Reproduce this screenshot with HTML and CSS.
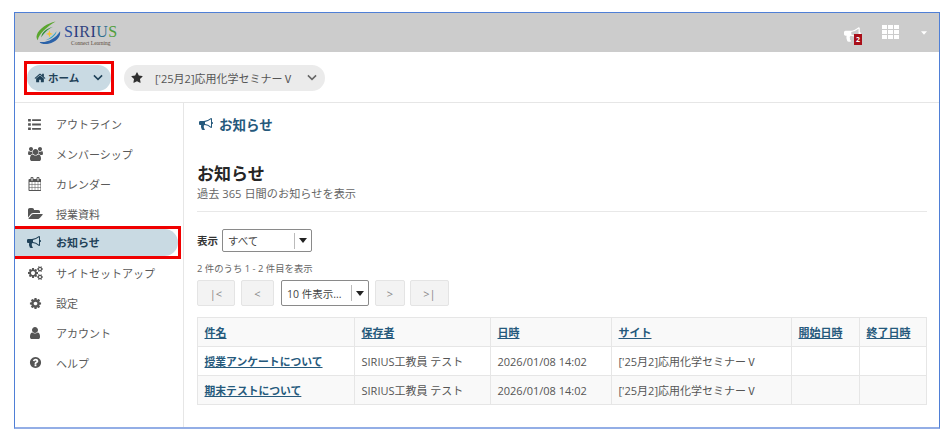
FILE: index.html
```html
<!DOCTYPE html>
<html lang="ja">
<head>
<meta charset="utf-8">
<title>お知らせ</title>
<link rel="stylesheet" href="styles.css">
</head>
<body>
<svg class="defs" width="0" height="0" aria-hidden="true">
  <symbol id="i-bullhorn" viewBox="0 0 1792 1792"><path d="M1664 640q53 0 90.500 37.500t37.500 90.500-37.500 90.500-90.500 37.500v384q0 52-38 90t-90 38q-417-347-812-380-58 19-91 66t-31 100.500 40 92.500q-20 33-23 65.500t6 58 33.500 55 48 50 61.500 50.500q-29 58-111.500 83t-168.500 11.500-132-55.500q-7-23-29.500-87.500t-32-94.500-23-89-15-101 3.500-98.500 22-110.500h-122q-66 0-113-47t-47-113v-192q0-66 47-113t113-47h480q435 0 896-384 52 0 90 38t38 90v384zm-128 604v-954q-394 302-768 343v270q377 42 768 341z"/></symbol>
  <symbol id="i-list" viewBox="0 0 14 12"><path d="M0 0h3v2.600H0zM0 4.700h3v2.600H0zM0 9.400h3V12H0zM4.400.3H14v2H4.400zM4.400 5H14v2H4.400zM4.400 9.700H14v2H4.400z"/></symbol>
  <symbol id="i-group" viewBox="0 0 1920 1792"><path d="M593 896q-162 5-265 128h-134q-82 0-138-40.500t-56-118.500q0-353 124-353 6 0 43.500 21t97.500 42.500 119 21.500q67 0 133-23-5 37-5 66 0 139 81 256zm1071 637q0 120-73 189.500t-194 69.500h-874q-121 0-194-69.500t-73-189.500q0-53 3.500-103.500t14-109 26.500-108.500 43-97.500 62-81 85.500-53.500 111.500-20q10 0 43 21.500t73 48 107 48 135 21.500 135-21.500 107-48 73-48 43-21.500q61 0 111.500 20t85.500 53.500 62 81 43 97.500 26.500 108.500 14 109 3.500 103.500zm-1024-1277q0 106-75 181t-181 75-181-75-75-181 75-181 181-75 181 75 75 181zm704 384q0 159-112.500 271.500t-271.500 112.500-271.500-112.500-112.500-271.500 112.500-271.500 271.500-112.500 271.500 112.500 112.500 271.500zm576 225q0 78-56 118.500t-138 40.500h-134q-103-123-265-128 81-117 81-256 0-29-5-66 66 23 133 23 59 0 119-21.500t97.500-42.500 43.500-21q124 0 124 353zm-128-609q0 106-75 181t-181 75-181-75-75-181 75-181 181-75 181 75 75 181z"/></symbol>
  <symbol id="i-cal" viewBox="0 0 1664 1792"><path d="M192 1664h288v-288h-288v288zm352 0h320v-288h-320v288zm-352-352h288v-320h-288v320zm352 0h320v-320h-320v320zm-352-384h288v-288h-288v288zm736 736h320v-288h-320v288zm-384-736h320v-288h-320v288zm768 736h288v-288h-288v288zm-384-352h320v-320h-320v320zm-352-864v-288q0-13-9.500-22.500t-22.500-9.500h-64q-13 0-22.500 9.500t-9.500 22.500v288q0 13 9.500 22.500t22.500 9.500h64q13 0 22.500-9.500t9.500-22.500zm736 864h288v-320h-288v320zm-384-384h320v-288h-320v288zm384 0h288v-288h-288v288zm32-480v-288q0-13-9.500-22.500t-22.500-9.500h-64q-13 0-22.500 9.500t-9.500 22.500v288q0 13 9.500 22.500t22.500 9.500h64q13 0 22.500-9.500t9.500-22.500zm384-64v1280q0 52-38 90t-90 38h-1408q-52 0-90-38t-38-90v-1280q0-52 38-90t90-38h128v-96q0-66 47-113t113-47h64q66 0 113 47t47 113v96h384v-96q0-66 47-113t113-47h64q66 0 113 47t47 113v96h128q52 0 90 38t38 90z"/></symbol>
  <symbol id="i-folder" viewBox="0 0 1920 1792"><path d="M1879 952q0 31-31 66l-336 396q-43 51-120.500 86.500t-143.500 35.500h-1088q-34 0-60.500-13t-26.500-43q0-31 31-66l336-396q43-51 120.500-86.500t143.500-35.500h1088q34 0 60.500 13t26.500 43zm-343-344v160h-832q-94 0-197 47.500t-164 119.500l-337 396-5 6q0-4-.5-12.500t-.5-12.500v-960q0-92 66-158t158-66h320q92 0 158 66t66 158v32h544q92 0 158 66t66 158z"/></symbol>
  <symbol id="i-cogs" viewBox="0 0 1920 1792"><path d="M896 896q0-106-75-181t-181-75-181 75-75 181 75 181 181 75 181-75 75-181zm768 512q0-52-38-90t-90-38-90 38-38 90q0 53 37.500 90.500t90.500 37.500 90.500-37.500 37.500-90.500zm0-1024q0-52-38-90t-90-38-90 38-38 90q0 53 37.500 90.500t90.500 37.500 90.500-37.500 37.500-90.500zm-384 421v185q0 10-7 19.500t-16 10.500l-155 24q-11 35-32 76 34 48 90 115 7 11 7 20 0 12-7 19-23 30-82.500 89.500t-78.500 59.500q-11 0-21-7l-115-90q-37 19-77 31-11 108-23 155-7 24-30 24h-186q-11 0-20-7.500t-10-17.500l-23-153q-34-10-75-31l-118 89q-7 7-20 7-11 0-21-8-144-133-144-160 0-9 7-19 10-14 41-53t47-61q-23-44-35-82l-152-24q-10-1-17-9.500t-7-19.500v-185q0-10 7-19.500t16-10.500l155-24q11-35 32-76-34-48-90-115-7-11-7-20 0-12 7-20 22-30 82-89t79-59q11 0 21 7l115 90q34-18 77-32 11-108 23-154 7-24 30-24h186q11 0 20 7.500t10 17.500l23 153q34 10 75 31l118-89q8-7 20-7 11 0 21 8 144 133 144 160 0 8-7 19-12 16-42 54t-45 60q23 48 34 82l152 23q10 2 17 10.500t7 19.500zm640 533v140q0 16-149 31-12 27-30 52 51 113 51 138 0 4-4 7-122 71-124 71-8 0-46-47t-52-68q-20 2-30 2t-30-2q-14 21-52 68t-46 47q-2 0-124-71-4-3-4-7 0-25 51-138-18-25-30-52-149-15-149-31v-140q0-16 149-31 13-29 30-52-51-113-51-138 0-4 4-7 4-2 35-20t59-34 30-16q8 0 46 46.500t52 67.500q20-2 30-2t30 2q51-71 92-112l6-2q4 0 124 70 4 3 4 7 0 25-51 138 17 23 30 52 149 15 149 31zm0-1024v140q0 16-149 31-12 27-30 52 51 113 51 138 0 4-4 7-122 71-124 71-8 0-46-47t-52-68q-20 2-30 2t-30-2q-14 21-52 68t-46 47q-2 0-124-71-4-3-4-7 0-25 51-138-18-25-30-52-149-15-149-31v-140q0-16 149-31 13-29 30-52-51-113-51-138 0-4 4-7 4-2 35-20t59-34 30-16q8 0 46 46.500t52 67.500q20-2 30-2t30 2q51-71 92-112l6-2q4 0 124 70 4 3 4 7 0 25-51 138 17 23 30 52 149 15 149 31z"/></symbol>
  <symbol id="i-cog" viewBox="0 0 1792 1792"><path d="M1152 896q0-106-75-181t-181-75-181 75-75 181 75 181 181 75 181-75 75-181zm512-109v222q0 12-8 23t-20 13l-185 28q-19 54-39 91 35 50 107 138 10 12 10 25t-9 23q-27 37-99 108t-94 71q-12 0-26-9l-138-108q-44 23-91 38-16 136-29 186-7 28-36 28h-222q-14 0-24.500-8.500t-11.500-21.500l-28-184q-49-16-90-37l-141 107q-10 9-25 9-14 0-25-11-126-114-165-168-7-10-7-23 0-12 8-23 15-21 51-66.500t54-70.500q-27-50-41-99l-183-27q-13-2-21-12.500t-8-23.500v-222q0-12 8-23t19-13l186-28q14-46 39-92-40-57-107-138-10-12-10-24 0-10 9-23 26-36 98.500-107.500t94.500-71.500q13 0 26 10l138 107q44-23 91-38 16-136 29-186 7-28 36-28h222q14 0 24.500 8.500t11.500 21.500l28 184q49 16 90 37l142-107q9-9 24-9 13 0 25 10 129 119 165 170 7 8 7 22 0 12-8 23-15 21-51 66.500t-54 70.500q26 50 41 98l183 28q13 2 21 12.500t8 23.500z"/></symbol>
  <symbol id="i-user" viewBox="0 0 1792 1792"><path d="M1536 1399q0 109-62.500 187t-150.500 78h-854q-88 0-150.500-78t-62.500-187q0-85 8.500-160.500t31.500-152 58.500-131 94-89 134.500-34.500q131 128 313 128t313-128q76 0 134.500 34.500t94 89 58.500 131 31.500 152 8.500 160.500zm-256-887q0 159-112.500 271.500t-271.500 112.500-271.500-112.500-112.500-271.500 112.500-271.500 271.500-112.500 271.500 112.500 112.500 271.500z"/></symbol>
  <symbol id="i-help" viewBox="0 0 1792 1792"><path d="M1024 1376v-192q0-14-9-23t-23-9h-192q-14 0-23 9t-9 23v192q0 14 9 23t23 9h192q14 0 23-9t9-23zm256-672q0-88-55.500-163t-138.500-116-170-41q-243 0-371 213-15 24 8 42l132 100q7 6 19 6 16 0 25-12 53-68 86-92 34-24 86-24 48 0 85.500 26t37.500 59q0 38-20 61t-68 45q-63 28-115.500 86.500t-52.500 125.500v36q0 14 9 23t23 9h192q14 0 23-9t9-23q0-19 21.500-49.500t54.500-49.500q32-18 49-28.500t46-35 44.500-48 28-60.500 12.500-81zm384 192q0 209-103 385.500t-279.500 279.500-385.500 103-385.500-103-279.500-279.500-103-385.500 103-385.500 279.500-279.500 385.500-103 385.500 103 279.500 279.500 103 385.500z"/></symbol>
  <symbol id="i-home" viewBox="0 0 1792 1792"><path d="M1472 992v480q0 26-19 45t-45 19h-384v-384h-256v384h-384q-26 0-45-19t-19-45v-480q0-1 .5-3t.5-3l575-474 575 474q1 2 1 6zm223-69l-62 74q-8 9-21 11h-3q-13 0-21-7l-692-577-692 577q-12 8-24 7-13-2-21-11l-62-74q-8-10-7-23.500t11-21.500l719-599q32-26 76-26t76 26l244 204v-195q0-14 9-23t23-9h192q14 0 23 9t9 23v408l219 182q10 8 11 21.500t-7 23.500z"/></symbol>
  <symbol id="i-star" viewBox="0 0 1792 1792"><path d="M1728 647q0 22-26 48l-363 354 86 500q1 7 1 20 0 21-10.500 35.500t-30.500 14.500q-19 0-40-12l-449-236-449 236q-22 12-40 12-21 0-31.500-14.500t-10.500-35.500q0-6 2-20l86-500-364-354q-25-27-25-48 0-37 56-46l502-73 225-455q19-41 49-41t49 41l225 455 502 73q56 9 56 46z"/></symbol>
  <symbol id="i-chev" viewBox="0 0 11 7"><path d="M1 1.200 5.500 5.500 10 1.200" fill="none" stroke="currentColor" stroke-width="1.700"/></symbol>
  <symbol id="i-caret" viewBox="0 0 10 6"><path d="M0 0h10L5 6Z"/></symbol>
</svg>

<div class="frame">
  <header class="topbar">
    <a class="logo" href="#">
      <svg class="logo-mark" viewBox="0 0 28 28" aria-hidden="true">
        <path d="M22 1C13 3 3 9 1 16c-1 3 0 5 1 6C3 15 12 7 22 1Z" fill="#5aa62e"/>
        <path d="M19 7C12 9 6 13 6 19c2-4 7-9 13-12Z" fill="#2f8f3a"/>
        <path d="M27 12c1 6-4 12-13 14-4 1-9 0-10-2 9 1 18-4 23-12Z" fill="#2b62a8"/>
        <path d="M23 12c-1 5-6 9-12 10 5-2 9-6 12-10Z" fill="#2aa0c8"/>
        <path d="m15 11 1 3 3 1-3 1-1 3-1-3-3-1 3-1Z" fill="#f3c531"/>
      </svg>
      <span class="logo-text">
        <span class="logo-name"><span class="c1">S</span><span class="c2">I</span><span class="c3">R</span><span class="c2">I</span><span class="c4">U</span><span class="c5">S</span></span>
        <span class="logo-sub">Connect Learning</span>
      </span>
    </a>
    <div class="top-actions">
      <span class="notify">
        <svg class="ic-notify"><use href="#i-bullhorn"/></svg>
        <span class="badge">2</span>
      </span>
      <span class="grid-ic"><i></i><i></i><i></i><i></i><i></i><i></i><i></i><i></i><i></i></span>
      <svg class="ic-topcaret"><use href="#i-caret"/></svg>
    </div>
  </header>

  <nav class="sitebar">
    <div class="mark mark-home">
      <a class="pill pill-home" href="#">
        <svg class="ic-home"><use href="#i-home"/></svg>
        <span class="pill-label">ホーム</span>
        <svg class="ic-chev"><use href="#i-chev"/></svg>
      </a>
    </div>
    <a class="pill pill-site" href="#">
      <svg class="ic-star"><use href="#i-star"/></svg>
      <span class="site-label">['25月2]応用化学セミナーⅤ</span>
      <svg class="ic-chev"><use href="#i-chev"/></svg>
    </a>
  </nav>

  <div class="body">
    <aside class="side">
      <a class="side-item" href="#"><span class="side-ic"><svg class="s-list"><use href="#i-list"/></svg></span>アウトライン</a>
      <a class="side-item" href="#"><span class="side-ic"><svg class="s-group"><use href="#i-group"/></svg></span>メンバーシップ</a>
      <a class="side-item" href="#"><span class="side-ic"><svg class="s-cal"><use href="#i-cal"/></svg></span>カレンダー</a>
      <a class="side-item" href="#"><span class="side-ic"><svg class="s-folder"><use href="#i-folder"/></svg></span>授業資料</a>
      <div class="mark mark-side">
        <a class="side-item active" href="#"><span class="side-ic"><svg class="s-horn"><use href="#i-bullhorn"/></svg></span>お知らせ</a>
      </div>
      <a class="side-item" href="#"><span class="side-ic"><svg class="s-cogs"><use href="#i-cogs"/></svg></span>サイトセットアップ</a>
      <a class="side-item" href="#"><span class="side-ic"><svg class="s-cog"><use href="#i-cog"/></svg></span>設定</a>
      <a class="side-item" href="#"><span class="side-ic"><svg class="s-user"><use href="#i-user"/></svg></span>アカウント</a>
      <a class="side-item" href="#"><span class="side-ic"><svg class="s-help"><use href="#i-help"/></svg></span>ヘルプ</a>
    </aside>

    <main class="main">
      <div class="tool-title"><svg class="ic-title"><use href="#i-bullhorn"/></svg>お知らせ</div>
      <h2 class="page-title">お知らせ</h2>
      <p class="page-sub">過去 365 日間のお知らせを表示</p>
      <div class="filter">
        <span class="filter-label">表示</span>
        <span class="select select-all"><span class="select-text">すべて</span><span class="select-btn"><svg class="ic-selcaret"><use href="#i-caret"/></svg></span></span>
      </div>
      <p class="count">2 件のうち 1 - 2 件目を表示</p>
      <div class="pager">
        <button class="pg pg-first" type="button">|&lt;</button>
        <button class="pg" type="button">&lt;</button>
        <span class="select select-page"><span class="select-text">10 件表示...</span><span class="select-btn"><svg class="ic-selcaret"><use href="#i-caret"/></svg></span></span>
        <button class="pg pg-next" type="button">&gt;</button>
        <button class="pg pg-last" type="button">&gt;|</button>
      </div>
      <table class="list">
        <colgroup><col class="c-a"><col class="c-b"><col class="c-c"><col class="c-d"><col class="c-e"><col class="c-f"></colgroup>
        <thead>
          <tr><th><a href="#">件名</a></th><th><a href="#">保存者</a></th><th><a href="#">日時</a></th><th><a href="#">サイト</a></th><th><a href="#">開始日時</a></th><th><a href="#">終了日時</a></th></tr>
        </thead>
        <tbody>
          <tr><td><a class="subject" href="#">授業アンケートについて</a></td><td>SIRIUS工教員 テスト</td><td>2026/01/08 14:02</td><td>['25月2]応用化学セミナーⅤ</td><td></td><td></td></tr>
          <tr><td><a class="subject" href="#">期末テストについて</a></td><td>SIRIUS工教員 テスト</td><td>2026/01/08 14:02</td><td>['25月2]応用化学セミナーⅤ</td><td></td><td></td></tr>
        </tbody>
      </table>
    </main>
  </div>
</div>
</body>
</html>
```
FILE: styles.css
```css
* { box-sizing: border-box; }
html, body { margin: 0; padding: 0; background: #fff; }
body {
  padding: 12px 12px 0 14px;
  font-family: "Open Sans", "Noto Sans CJK JP", sans-serif;
  font-size: 11px;
  color: #555;
  height: 438px;
  overflow: hidden;
}
a { color: inherit; text-decoration: none; }
svg { display: block; fill: currentColor; }
.defs { position: absolute; }

.frame {
  width: 926px;
  height: 417px;
  border: 1px solid #4f7fd6;
  border-bottom-color: #93aee6;
  border-bottom-width: 2px;
  display: flex;
  flex-direction: column;
  overflow: hidden;
}

.topbar {
  height: 39px;
  flex: none;
  background: #cccccc;
  display: flex;
  align-items: center;
  justify-content: space-between;
  padding: 0 12px 0 21px;
}
.logo { display: flex; align-items: center; gap: 3px; }
.logo-mark { width: 25px; height: 26px; margin-top: 1px; }
.logo-text { display: flex; flex-direction: column; align-items: center; margin-top: 6px; }
.logo-name {
  font-family: "Liberation Serif", serif;
  font-size: 16px;
  line-height: 14px;
  letter-spacing: 0.500px;
  font-weight: 400;
}
.c1 { color: #2b4f9e; }
.c2 { color: #2a3a7a; }
.c3 { color: #33457f; }
.c4 { color: #2f6d8e; }
.c5 { color: #4f9e3c; }
.logo-sub {
  font-family: "Liberation Serif", serif;
  font-size: 5.500px;
  line-height: 7px;
  color: #5a4a3a;
  margin-top: 1px;
}
.top-actions { display: flex; align-items: center; color: #fff; }
.notify { position: relative; display: block; width: 16px; height: 16px; margin-right: 22px; margin-top: 2px; }
.ic-notify { width: 17px; height: 17px; }
.badge {
  position: absolute;
  left: 10px;
  top: 8px;
  width: 8px;
  height: 11px;
  background: #a90f1a;
  color: #fff;
  font-size: 7px;
  font-weight: 700;
  line-height: 11px;
  text-align: center;
}
.grid-ic {
  display: grid;
  grid-template-columns: repeat(3, 5px);
  grid-auto-rows: 4px;
  gap: 1px;
  margin-right: 22px;
  margin-top: -2px;
}
.grid-ic i { background: #fff; }
.ic-topcaret { width: 6px; height: 4px; margin-top: 1px; }

.sitebar {
  height: 51px;
  flex: none;
  border-bottom: 1px solid #e6e6e6;
  display: flex;
  align-items: center;
  gap: 10px;
  padding: 1px 0 0 9px;
}
.mark { border: 3px solid #f00000; }
.mark-home { padding: 1px 0; height: 34px; }
.pill {
  display: flex;
  align-items: center;
  height: 26px;
  border-radius: 13px;
  color: #2f2f2f;
}
.pill-home {
  width: 84px;
  background: #c9dae3;
  padding: 0 8px 0 7px;
  color: #1f4158;
  font-weight: 700;
}
.ic-home { width: 12px; height: 12px; margin-right: 2px; }
.pill-label { flex: 1; font-size: 10.500px; }
.ic-chev { width: 10px; height: 7px; flex: none; }
.pill-site {
  width: 201px;
  background: #ebebeb;
  padding: 0 8px 0 7px;
  color: #666;
}
.ic-star { width: 12px; height: 12px; margin-right: 12px; flex: none; color: #2f2f2f; }
.site-label { flex: 1; font-size: 11px; color: #555; white-space: nowrap; }

.body { flex: 1; display: flex; min-height: 0; }
.side {
  width: 169px;
  flex: none;
  border-right: 1px solid #e6e6e6;
  padding-top: 6.400px;
}
.side-item {
  display: flex;
  align-items: center;
  height: 29.800px;
  padding-left: 13px;
  font-size: 11px;
  color: #5a5a5a;
}
.side-ic { width: 28px; flex: none; display: flex; align-items: center; color: #555; }
.s-list { width: 13px; height: 11px; }
.s-group { width: 15px; height: 14px; }
.s-cal { width: 13px; height: 14px; }
.s-folder { width: 15px; height: 14px; }
.s-horn { width: 14px; height: 14px; margin-left: -1px; }
.s-cogs { width: 15px; height: 14px; }
.s-cog { width: 13px; height: 13px; margin-left: 1px; }
.s-user { width: 14px; height: 14px; }
.s-help { width: 13px; height: 13px; margin-left: 1px; }
.mark-side {
  width: 166px;
  height: 33px;
  border-left: 0;
  margin: -3px 0 0;
}
.active {
  width: 163px;
  height: 27px;
  background: #c9dae3;
  border-radius: 0 14px 14px 0;
  color: #1f4158;
  font-weight: 700;
}
.active .side-ic { color: #1f4158; }

.main { flex: 1; padding: 0 12px 0 13px; min-width: 0; }
.tool-title {
  display: flex;
  align-items: center;
  height: 18px;
  margin-top: 12px;
  padding-left: 2px;
  font-size: 13.500px;
  font-weight: 700;
  color: #25597c;
}
.ic-title { width: 14px; height: 14px; margin-right: 6px; }
.page-title {
  margin: 29px 0 0;
  font-size: 17px;
  line-height: 24px;
  font-weight: 700;
  color: #262626;
}
.page-sub {
  margin: 0;
  font-size: 11.200px;
  line-height: 16px;
  color: #666;
  padding-bottom: 9px;
  border-bottom: 1px solid #e8e8e8;
}
.filter { display: flex; align-items: center; gap: 4px; margin-top: 17px; }
.filter-label { font-weight: 700; font-size: 10.500px; color: #333; }
.select {
  display: flex;
  align-items: center;
  background: #fff;
  border: 1px solid #8a8a8a;
  border-radius: 2px;
  color: #444;
}
.select-all { width: 90px; height: 23px; }
.select-page { width: 88px; height: 26px; margin-left: 1px; }
.select-text { flex: 1; padding-left: 5px; font-size: 10.500px; white-space: nowrap; }
.select-btn {
  width: 17px;
  height: 16px;
  border-left: 1px solid #bbb;
  display: flex;
  align-items: center;
  justify-content: center;
}
.ic-selcaret { width: 8px; height: 5px; color: #222; }
.count { margin: 10px 0 0; font-size: 9.400px; line-height: 14px; color: #666; }
.pager { display: flex; align-items: center; gap: 6px; margin-top: 4px; height: 26px; }
.pg {
  width: 33px;
  height: 26px;
  padding: 0;
  background: #f3f3f3;
  border: 1px solid #e4e4e4;
  border-radius: 2px;
  font-family: inherit;
  font-size: 11px;
  color: #888;
}
.pg-first { width: 38px; }
.pg-next { width: 30px; }
.pg-last { width: 39px; margin-left: -1px; }

.list {
  width: 729px;
  margin-top: 11px;
  border-collapse: collapse;
  table-layout: fixed;
  font-size: 11px;
}
.c-a { width: 157px; }
.c-b { width: 136px; }
.c-c { width: 121px; }
.c-d { width: 180px; }
.c-e { width: 68px; }
.c-f { width: 67px; }
.list th, .list td {
  height: 29px;
  padding: 0 6.500px;
  border: 1px solid #e6e6e6;
  text-align: left;
  white-space: nowrap;
}
.list th { background: #f9f9f9; font-weight: 700; }
.list th a { color: #25597c; text-decoration: underline; }
.list tbody tr:nth-child(2) td { background: #f9f9f9; }
.subject { color: #25597c; font-weight: 700; font-size: 10.800px; text-decoration: underline; }
```
